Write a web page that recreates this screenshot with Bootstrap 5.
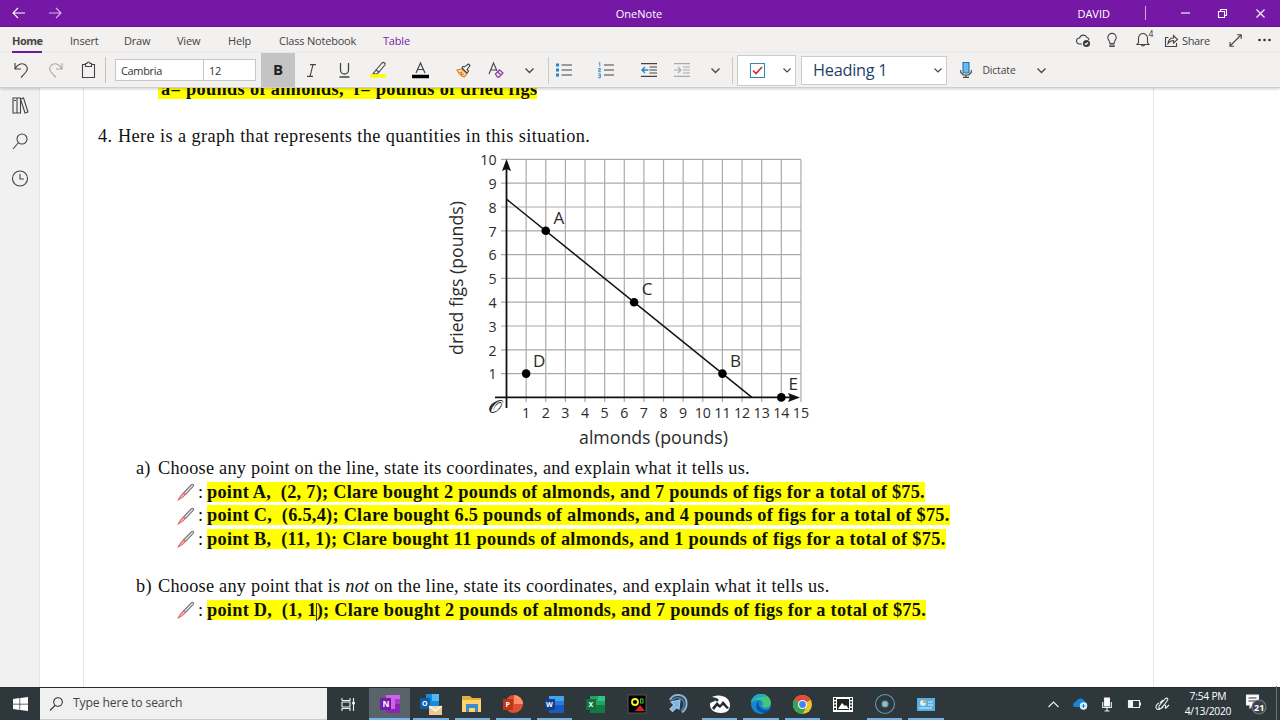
<!DOCTYPE html>
<html lang="en">
<head>
<meta charset="utf-8">
<meta name="viewport" content="width=device-width, initial-scale=1">
<title>OneNote</title>
<link href="https://cdn.jsdelivr.net/npm/bootstrap@5.3.0/dist/css/bootstrap.min.css" rel="stylesheet">
<style>
body{width:1280px;height:720px;overflow:hidden;font-family:"Open Sans","Noto Sans",sans-serif;font-size:11px;color:#444;background:#fff;line-height:1}
svg{display:block;fill:none;stroke:#444;stroke-width:1.1;overflow:visible}
svg text{stroke:none}
.titlebar{height:27px;background:#7518a5;color:#fff;display:grid;grid-template-columns:37px 36px 530px 72px 443px 54px 26px 48px 28px;align-items:center;justify-items:center;border-bottom:1px solid #651391}
.titlebar svg{stroke:#fff}
.tabs{height:26px;background:#f3f0f0;display:grid;grid-template-columns:58px 54px 53px 51px 51px 104px 686px 28px 30px 36px 59px 26px 32px;padding-left:12px;align-items:center;letter-spacing:-.2px}
.tabs>span{margin-top:1px}
.tabs>svg{justify-self:center}
.tabs>.share{letter-spacing:-.35px;margin-left:-2px}
.tabs>.hometab{font-weight:700;border-bottom:2px solid #7518a5;width:30px;height:24px;line-height:23px;margin-top:1px;letter-spacing:-.5px}
.toolbar{height:35px;background:#f3f1f0;display:grid;padding-left:4px;grid-template-columns:34px 34px 32px 11px 89px 52px 39px 32px 34px 34px 50px 36px 30px 38px 30px 54px 32px 34px 34px 66px 150px 34px 32px 52px;align-items:center;justify-items:center;border-bottom:1px solid #cfcdcd;position:relative;z-index:2;box-shadow:0 1px 3px #0003}
.vline{justify-self:start;width:1px;height:26px;background:#c4c2c2;margin-left:1px}
.field{background:#fff;border:1px solid #c8c6c6;height:22px;width:100%;padding-left:5px;line-height:21px;color:#333;letter-spacing:-.35px}
.field+.field{border-left:0}
.boldbtn{background:#c5c4c4;width:34px;height:34px;justify-self:end;font-size:15px;line-height:1;padding-bottom:2px;color:#222}
.sepr{border-right:1px solid #cbc9c9;width:100%;height:27px;padding-right:1px}
.checkbox-field{width:59px;height:31px;background:#fff;border:1px solid #cdcbcb;padding:0 4px 0 12px}
.style-field{width:146px;height:29px;background:#fff;border:1px solid #cdcbcb;font-size:16.3px;letter-spacing:-.25px;color:#1e3f66;padding:1px 4px 0 11px}
.dictate{font-size:10.3px;letter-spacing:-.1px}
.workspace{height:599px}
.rail{width:40px;background:#f1f1f1;border-right:1px solid #e4e4e4;padding-top:5px}
.rail svg{height:22px;margin:0 0 15px 9px}
.page{width:1071px;margin-left:43px;border-left:1px solid #e6e6e6;border-right:1px solid #e6e6e6;overflow:hidden;color:#111;font-family:"Liberation Serif",serif;font-size:18.3px}
.ln{height:23.65px;line-height:23.65px;display:flex;align-items:baseline;white-space:pre}
.hl{background:#ff0;font-weight:700;line-height:20px;height:20px;display:inline-block;color:#111;white-space:pre;letter-spacing:.27px}
.hl.wider{letter-spacing:.31px}
.clip{margin-top:-9px;padding-left:74px;height:20px;overflow:hidden}
.clip .hl{height:20px;padding-left:3px;letter-spacing:.33px}
.q4{margin-top:25.500px;padding-left:14px;letter-spacing:.4px}
.opt{padding-left:52px;letter-spacing:.24px}
.num4{width:20px}
.numx{width:22px}
.ans{padding-left:93px}
.ans svg{align-self:center;margin-right:4px}
.ans .colon{width:9px}
.chart{margin:2px 0 2px 356px}
.chart text{font-family:"Open Sans",sans-serif;fill:#2b2b2b}
.caret{display:inline-block;width:1px;height:18px;background:#333;margin:0 -.5px;vertical-align:middle}
.taskbar{height:33px;background:#2e373c;display:grid;grid-template-columns:40px 287px 42px repeat(14,41.25px) 120px 27px 27px 27px 31px 59px 1fr;position:relative;z-index:3;border-top:1px solid #252e33}
.taskbar>div{display:flex;align-items:center;justify-content:center}
.taskbar svg{stroke:#eee}
.taskbar .find{background:#f0f0f0;justify-content:start;padding-left:9px;font-size:12.2px;letter-spacing:-.15px;color:#444;border-bottom:1px solid #ccc}
.find svg{stroke:#333;margin-right:9px}
.taskbar .more{padding-left:93px}
.taskbar .notes{justify-content:start;padding-left:7px}
.run{box-shadow:inset 0 -2px #79afe0;margin:0 3px}
.on{background:#59636a;box-shadow:inset 0 -2px #79b5ea}
.clock{font-size:10.3px;letter-spacing:-.25px;line-height:15px;color:#fff;text-align:center;white-space:nowrap}
.office text,.badge21{font:700 7px "Open Sans",sans-serif;fill:#fff}
</style>
<script src="https://cdn.jsdelivr.net/npm/bootstrap@5.3.0/dist/js/bootstrap.bundle.min.js"></script>
</head>
<body class="d-flex flex-column">
<header>
<div class="titlebar">
<svg width="14" height="12"><path d="M13 6H1M6 1L1 6l5 5"/></svg>
<svg width="14" height="12" opacity=".7"><path d="M1 6h12M8 1l5 5-5 5"/></svg>
<span></span><span>OneNote</span><span class="w-100 text-end pe-2">DAVID</span>
<svg width="1" height="14"><path d="M.5 0v14" opacity=".6"/></svg>
<svg width="9" height="2"><path d="M0 1h9"/></svg>
<svg width="9" height="9"><path d="M.5 2.500h6v6h-6zM2.500 2V.5h6v6H7"/></svg>
<svg width="9" height="9"><path d="M.5.5l8 8M8.500 .5l-8 8"/></svg>
</div>
<nav class="tabs">
<span class="hometab">Home</span><span>Insert</span><span>Draw</span><span>View</span><span>Help</span><span>Class Notebook</span><span style="color:#7719aa">Table</span>
<svg width="14" height="13"><path d="M6 10H3.500a3 3 0 010-6 4 4 0 017.500-.5 2.500 2.500 0 012 2.500"/><circle cx="10.500" cy="9.500" r="3" fill="#333"/><path d="M9 9.500l1 1 2-2" stroke="#fff"/></svg>
<svg width="10" height="14"><path d="M3 10.500C3 8 .8 7 .8 4.600a4.200 4.200 0 018.400 0C9.200 7 7 8 7 10.500zM3 12h4v1.500H3z"/></svg>
<svg width="18" height="16"><path d="M1 12.500h12l-1.500-2V6a4.500 4.500 0 00-9 0v4.500zM5.500 13a1.600 1.600 0 003 0"/><text x="12.500" y="5" font-size="8.500" fill="#333">4</text></svg>
<span class="share d-flex align-items-center"><svg class="ms-1 me-1" width="13" height="13"><path d="M3.500 3.500H.5v9h11V9M3 9.500c.5-4 2.500-5.500 5.500-5.500V1.500l4 4-4 3.500V6.500C6 6.500 4.500 7.500 3 9.500z"/></svg>Share</span>
<svg width="13" height="13"><path d="M1 12L12 1M8 .8h4.200V5M1 8v4.200h4"/></svg>
<svg width="14" height="4"><g fill="#333" stroke="none"><circle cx="2.500" cy="2" r="1.300"/><circle cx="7.500" cy="2" r="1.300"/><circle cx="12.500" cy="2" r="1.300"/></g></svg>
</nav>
<div class="toolbar">
<svg width="15" height="16"><path d="M1 1v6h6M1 7C4 1.500 9 .5 12 3.500c3 3.500 1 6-5 12"/></svg>
<svg width="15" height="16" style="stroke:#aaa"><path d="M14 1v6H8M14 7C11 1.500 6 .5 3 3.500c-3 3.500-1 6 5 12"/></svg>
<svg width="13" height="16"><path d="M3.500 2.500h-3v13h12v-13h-3M3.500 4.500v-3H5a1.500 1.500 0 013 0h1.500v3z"/></svg>
<span class="vline"></span><span class="field">Cambria</span><span class="field">12</span>
<span class="boldbtn d-flex align-items-center justify-content-center fw-bold">B</span>
<svg width="9" height="13"><path d="M3 .6h6M0 12.400h6M6 .6L3 12.400"/></svg>
<svg width="11" height="15"><path d="M1.500 0v7a4 4 0 008 0V0M.5 14h10" stroke-width="1.300"/></svg>
<svg width="17" height="17"><path d="M6 8l6-7c1.500-1.500 4 0 2.800 2L9 10zM6 8l3 2-2 2H3z"/><path d="M0 14h16" stroke="#ff0" stroke-width="3.500"/></svg>
<svg width="17" height="17"><path d="M4 11L8.500 1 13 11M5.500 7.500h6" stroke-width="1.200"/><path d="M0 14.500h17" stroke="#000" stroke-width="3.500"/></svg>
<svg width="15" height="15"><path d="M6 6L1 7c2 4 4 6 7 7l3-3z" fill="#ffe0a0" stroke="#dd812c"/><path d="M3 10l3-1-1 3 3-1" stroke="#dd812c"/><path d="M6 5l5 5 1.500-2L11 6.500l3-4L12.500 1l-4 3L7 3.500z" fill="#fff"/></svg>
<svg width="16" height="15"><path d="M1 11L5.500 0 9 8M3 7h5"/><path d="M7.500 11l4-4 3.500 3-4 4h-1.500zM9.500 9l3.500 3" stroke="#953ba8" stroke-width="1.300"/></svg>
<span class="sepr d-flex justify-content-center align-items-center"><svg width="9" height="5"><path d="M.5.5l4 4 4-4" stroke-width="1.300"/></svg></span>
<svg width="16" height="14"><path d="M5.500 2H16M5.500 7H16M5.500 12H16"/><path d="M0 2h3M0 7h3M0 12h3" stroke="#2387c7" stroke-width="3"/></svg>
<svg width="16" height="14"><path d="M6 2h10M6 7h10M6 12h10"/><path d="M.8.2l1-.7v4M.3 5.500h2v1.500h-1.500v1.700h2M.3 10.800h2v4H.3M.3 12.800h2" stroke="#2387c7" stroke-width=".9"/></svg>
<svg width="16" height="14"><path d="M0 .6h16M8.500 4h7.500M8.500 7H16M8.500 10H16M0 13.400h16"/><path d="M7.500 7H1M4 4L1 7l3 3" stroke="#2387c7" stroke-width="1.400"/></svg>
<svg width="16" height="14" style="stroke:#aaa"><path d="M0 .6h16M9 4h7M9 7h7M9 10h7M0 13.400h16M0 7h7M4 4l3 3-3 3"/></svg>
<span class="sepr d-flex justify-content-center align-items-center"><svg width="9" height="5"><path d="M.5.5l4 4 4-4" stroke-width="1.300"/></svg></span>
<span class="checkbox-field d-flex align-items-center justify-content-between"><svg width="15" height="15"><path d="M.5.5h14v14H.5z" stroke="#368bad"/><path d="M3 7.500l3 3 6-6.500" stroke="#d12e32" stroke-width="1.700"/></svg><svg width="8" height="5"><path d="M.5.5l3.500 3.500L7.500.5"/></svg></span>
<span class="style-field d-flex align-items-center justify-content-between"><span>Heading 1</span><svg width="8" height="5"><path d="M.5.5l3.500 3.500L7.500.5"/></svg></span>
<svg width="12" height="16"><path d="M3 .5h6v10.500H3z" fill="#68b8f1" stroke="#2373a9"/><path d="M.7 8v2.500l2.500 2.500h5.600l2.500-2.500V8M6 13v2M3 15.400h6"/></svg>
<span class="dictate">Dictate</span><svg width="9" height="5"><path d="M.5.5l4 4 4-4" stroke-width="1.300"/></svg>
</div>
</header>
<main class="workspace d-flex">
<aside class="rail">
<svg width="18" height="16" viewBox="0 -3 18 22"><path d="M4 2h4v15H4zM8 2h3.500v15H8zM11.500 3l3-1 4.500 14-3 1zM5 4.500h2"/></svg>
<svg width="18" height="16" viewBox="0 -3 18 22"><circle cx="13" cy="6" r="5"/><path d="M9.500 9.500L4 16"/></svg>
<svg width="18" height="16" viewBox="0 -3 18 22"><circle cx="11" cy="8.500" r="7.500"/><path d="M11 4v5h4"/></svg>
</aside>
<section class="page">
<div class="clip"><span class="hl">a= pounds of almonds,  f= pounds of dried figs</span></div>
<div class="ln q4"><span class="num4">4.</span><span>Here is a graph that represents the quantities in this situation.</span></div>
<svg class="chart" width="380" height="305" viewBox="440 150 380 305" id="chart"></svg>
<div class="ln opt"><span class="numx">a)</span><span>Choose any point on the line, state its coordinates, and explain what it tells us.</span></div>
<div class="ln ans"><svg width="17" height="17"><use href="#brush"/></svg><span class="colon">:</span><span class="hl">point A,  (2, 7); Clare bought 2 pounds of almonds, and 7 pounds of figs for a total of $75.</span></div>
<div class="ln ans"><svg width="17" height="17"><use href="#brush"/></svg><span class="colon">:</span><span class="hl">point C,  (6.5,4); Clare bought 6.5 pounds of almonds, and 4 pounds of figs for a total of $75.</span></div>
<div class="ln ans"><svg width="17" height="17"><use href="#brush"/></svg><span class="colon">:</span><span class="hl wider">point B,  (11, 1); Clare bought 11 pounds of almonds, and 1 pounds of figs for a total of $75.</span></div>
<div class="ln"></div>
<div class="ln opt"><span class="numx">b)</span><span>Choose any point that is <i>not</i> on the line, state its coordinates, and explain what it tells us.</span></div>
<div class="ln ans"><svg width="17" height="17"><use href="#brush"/></svg><span class="colon">:</span><span class="hl">point D,  (1, 1<span class="caret"></span>); Clare bought 2 pounds of almonds, and 7 pounds of figs for a total of $75.</span></div>
</section>
</main>
<footer class="taskbar">
<div><svg width="15" height="14"><path fill="#fff" stroke="none" d="M0 2l6.500-1v5.700H0zM7.200.9L15 0v6.700H7.200zM0 7.400h6.500v5.700L0 12zM7.200 7.400H15V14l-7.800-1z"/></svg></div>
<div class="find"><svg width="15" height="14"><circle cx="9" cy="5" r="4.300"/><path d="M6 8.500L1 13.500"/></svg>Type here to search</div>
<div><svg width="15" height="13"><path d="M1 0v2.500h8V0M1 13v-2.500h8V13M1 4v5M9 4v5M1 4h8v5H1M12.500 0v13"/><circle cx="12.500" cy="5" r="1" fill="#eee"/></svg></div>
<div class="on"><svg class="office" width="20" height="18" style="stroke:none"><path fill="#ca64ea" d="M6 0h14v18H6z"/><path fill="#a33bc8" d="M15 4h5v5h-5z"/><path fill="#8728ad" d="M15 9h5v9H6v-4h9z"/><path fill="#7719aa" d="M0 3h11v12H0z"/><text x="2.500" y="12" style="font-size:8.500px">N</text></svg></div>
<div class="run"><svg class="office" width="22" height="20" style="stroke:none"><path fill="#168bdc" d="M6 0h13v13H6z"/><path fill="#50baf0" d="M12 0h7v7h-7z"/><path fill="#0f5ba8" d="M0 4h10v11H0z"/><text x="2" y="12">O</text><path fill="#efc88d" d="M9 12h13v9H9z"/><path d="M9 12l6.500 5 6.500-5" stroke="#fff" fill="#f7dbb0"/></svg></div>
<div class="run"><svg width="20" height="16" style="stroke:none"><path fill="#e7ad3c" d="M0 0h8l2 2h9v5H0z"/><path fill="#fcd46b" d="M0 4h19v12H0z"/><path fill="#3c8dc8" d="M4 8h12v8h-3v-4H7v4H4z"/></svg></div>
<div class="run"><svg class="office" width="20" height="18" style="stroke:none"><circle cx="11" cy="9" r="9" fill="#dc5131"/><path d="M11 0a9 9 0 019 9h-9z" fill="#ff8f6b"/><path fill="#bd3518" d="M0 4h10v11H0z"/><text x="2.500" y="12">P</text></svg></div>
<div class="run"><svg class="office" width="19" height="17" style="stroke:none"><path fill="#185abd" d="M4 0h15v17H4z"/><path fill="#41a5ee" d="M4 0h15v5H4z"/><path fill="#2b7cd3" d="M4 5h15v4H4z"/><path fill="#103f91" d="M0 3h10v11H0z"/><text x="1" y="11">W</text></svg></div>
<div><svg class="office" width="19" height="17" style="stroke:none"><path fill="#21a366" d="M4 0h15v17H4z"/><path fill="#33c481" d="M12 0h7v5h-7z"/><path fill="#107c41" d="M4 9h15v8H4z"/><path fill="#12703d" d="M0 3h10v11H0z"/><text x="2.500" y="11">X</text></svg></div>
<div><svg width="18" height="18"><path d="M0 0h18v18H0z" fill="#000" stroke="#555"/><circle cx="7" cy="7" r="3" stroke="#fafa20" stroke-width="1.800"/><path d="M12.500 4h2.500v4h-2.500z" stroke="#3bc72b"/><path d="M7 16l5-6 5 6z" fill="#e51d23" stroke="none"/></svg></div>
<div><svg width="20" height="20"><path d="M2 6C5-1 17-1 18.500 8c.5 4-1 8-4.500 10.500" stroke="#8fb0d2" stroke-width="2"/><path d="M4 7c3-5 11-4 12 2 .3 3-1 6-3 8" stroke="#4a78a8" stroke-width="1.600"/><path d="M3 8l9-2-1 9-2.500-1.500-4 4-2.500-2.500 4-4z" fill="#77b8e9" stroke="#a4cbe8"/></svg></div>
<div class="run"><svg width="20" height="18" style="stroke:none"><path fill="#fff" d="M2 2c8-4 18 0 18 8 0 5-3 8-9 8C5 18 0 15 0 10V8l5-2 2-3z"/><path fill="#22292e" d="M2 13l5-6 3 3 3-4 6 7-2 1-4-4-3 3-3-2-3 4z"/><circle cx="7" cy="5" r="1.500" fill="#22292e"/></svg></div>
<div class="run"><svg width="20" height="20" style="stroke:none"><circle cx="10" cy="10" r="10" fill="#1687d4"/><path fill="#45c577" d="M0 9C1-3 19-3 20 9c0 5-7 6-9 3 2-4 0-6-4-6-3 0-5 1-7 3z"/><path fill="#22a6cf" d="M0 9C1-1 12-2 16 3 10 2 4 4 0 9z"/><path fill="#0c519f" d="M8 7c-6 5-2 12 6 12 3-1 4-2 5-4-7 3-13-2-11-8z"/></svg></div>
<div class="run"><svg width="19" height="19" style="stroke:none"><circle cx="9.500" cy="9.500" r="9.500" fill="#eac431"/><path fill="#e34a3a" d="M9.500 9.500L1.300 4.700a9.500 9.500 0 0116.400 0z"/><path fill="#36a552" d="M9.500 9.500L1.300 4.700A9.500 9.500 0 009.500 19l3-5z"/><circle cx="9.500" cy="9.500" r="4.500" fill="#fff"/><circle cx="9.500" cy="9.500" r="3.400" fill="#4285f4"/></svg></div>
<div><svg width="20" height="15" style="stroke:none"><path fill="#fff" d="M0 0h20v15H0z"/><path fill="#222" d="M4 2h12v11H4z"/><path fill="#fff" d="M5 12l4-6 3 3 1-1 3 4z"/><path d="M2 1v13M18 1v13" stroke="#222" stroke-width="1.800" stroke-dasharray="2 1.300"/></svg></div>
<div class="run"><svg width="20" height="20" style="stroke:#6498ad"><circle cx="10" cy="10" r="9.500"/><circle cx="10" cy="10" r="3" fill="#85c3df"/></svg></div>
<div class="run"><svg width="18" height="13" style="stroke:none"><path fill="#57b1df" d="M0 0h18v13H0z"/><circle cx="6" cy="5" r="3" fill="#d5eff9"/><path d="M6 5V2a3 3 0 013 3z" fill="#e5a94c"/><path d="M11 4h5M11 7h5M2 10h13" stroke="#d6f0fb"/></svg></div>
<div class="more"><svg width="11" height="7"><path d="M.5 6L5.500 1l5 5"/></svg></div>
<div><svg width="15" height="12" style="stroke:none"><path d="M1 9c-2-3 0-5 2-5 2-5 8-4 9 0 3 0 3 4 1 5z" fill="#1686db"/><circle cx="10.500" cy="8" r="3.700" fill="#e5f4fc"/><path d="M8.500 8h4M10.500 6v4" stroke="#1686db"/></svg></div>
<div><svg width="10" height="15"><rect x="2.500" y="1" width="5" height="8" fill="#fff"/><path d="M.7 5v5.500h8.600V5M5 11v2.500M2.500 14h5"/></svg></div>
<div><svg width="13" height="8"><path d="M.5.5h11v7H.5zM12.500 2.500v3"/><path d="M1.500 1.500h3v5h-3z" fill="#fff"/></svg></div>
<div><svg width="14" height="14"><path d="M3 9L9 2c2-2 4 0 2 2L6 11l-3 1zM3 6C-2 9 0 14 4 12c3-1 3-5 5-4s-1 4 1 3l3-3M7 3L4 6"/></svg></div>
<div><div class="clock">7:54 PM<br>4/13/2020</div></div>
<div class="notes"><svg width="24" height="21"><path d="M1.500 1h12v10H8l-3 3v-3H1.500z" fill="#fff"/><path d="M3.500 4h8M3.500 7h8" stroke="#333"/><circle cx="14" cy="13" r="7" fill="#3b4348" stroke="#747b80"/><text class="badge21" x="9" y="16.500" style="font-size:9px">21</text><path d="M31.500-8v37" stroke="#697176"/></svg></div>
</footer>
<svg width="0" height="0" class="position-absolute"><defs><g id="brush"><path d="M6.500 9L14.500 .8c1.500-1 2.700 .3 1.700 1.700L8.500 10.500z" stroke="#777" fill="#eee"/><path d="M6.500 9l2 1.500C6 13.500 3 15.500 1.200 16 2.500 13 4 11.500 6.500 9z" stroke="#dc686c" fill="#f8bfc1"/></g></defs></svg>
<script>
const X=i=>506.5+19.63*i, Y=j=>397.4-23.8*j;
let s='';
const line=(a,b,c,d,k,w)=>s+=`<path d="M${a} ${b}L${c} ${d}" stroke="${k}" stroke-width="${w}"/>`;
const label=(x,y,t,z,a='middle')=>s+=`<text x="${x}" y="${y}" font-size="${z}" text-anchor="${a}">${t}</text>`;
for(let i=1;i<=15;i++){line(X(i),Y(10),X(i),402,'#aaa',1.2);label(X(i),418,i,14.2)}
for(let j=1;j<=10;j++){line(501,Y(j),X(15),Y(j),'#aaa',1.2);label(496.5,Y(j)+5.8,j,14.2,'end')}
line(X(0),408,X(0),165,'#111',1.8);line(495,Y(0),795,Y(0),'#111',1.8);
line(X(0),Y(8.33),X(12.5),Y(0),'#111',1.5);
s+=`<path fill="#111" stroke="none" d="M506.500 159l4.500 12-4.500-2-4.500 2zM800 397.400l-12 4.500 2-4.500-2-4.500z"/>`;
for(const [n,x,y,dx] of [['A',2,7,13],['C',6.5,4,13],['B',11,1,13],['D',1,1,13],['E',14,0,12]]){
 s+=`<circle cx="${X(x)}" cy="${Y(y)}" r="4.300" fill="#000" stroke="none"/>`;label(X(x)+dx,Y(y)-7,n,17)}
s+=`<text transform="translate(488 413) scale(1.3 1)" style="font:17px 'DejaVu Serif','DejaVu Sans',serif">𝒪</text>`;
label(653.5,444,'almonds (pounds)',17.7);
s+=`<text transform="translate(463 278) rotate(-90)" font-size="17.700" text-anchor="middle">dried figs (pounds)</text>`;
document.getElementById('chart').innerHTML=s;
</script>
</body>
</html>
